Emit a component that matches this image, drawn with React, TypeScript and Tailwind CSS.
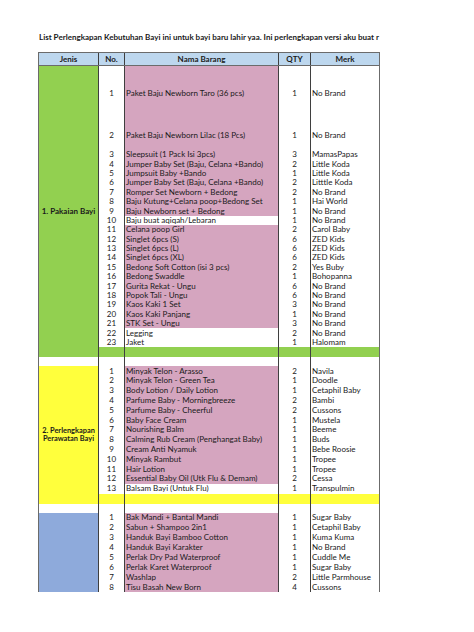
import React from "react";

type Item = [string, string, string, string, boolean];

const sec1: Item[] = [
  ["3", "Sleepsuit (1 Pack Isi 3pcs)", "3", "MamasPapas", true],
  ["4", "Jumper Baby Set (Baju, Celana +Bando)", "2", "Little Koda", true],
  ["5", "Jumpsuit Baby +Bando", "1", "Little Koda", true],
  ["6", "Jumper Baby Set (Baju, Celana +Bando)", "2", "Litttle Koda", true],
  ["7", "Romper Set Newborn + Bedong", "2", "No Brand", true],
  ["8", "Baju Kutung+Celana poop+Bedong Set", "1", "Hai World", true],
  ["9", "Baju Newborn set + Bedong", "1", "No Brand", true],
  ["10", "Baju buat aqiqah/Lebaran", "1", "No Brand", false],
  ["11", "Celana poop Girl", "2", "Carol Baby", true],
  ["12", "Singlet 6pcs (S)", "6", "ZED Kids", true],
  ["13", "Singlet 6pcs (L)", "6", "ZED Kids", true],
  ["14", "Singlet 6pcs (XL)", "6", "ZED Kids", true],
  ["15", "Bedong Soft Cotton (isi 3 pcs)", "2", "Yes Buby", true],
  ["16", "Bedong Swaddle", "1", "Bohopanna", true],
  ["17", "Gurita Rekat - Ungu", "6", "No Brand", true],
  ["18", "Popok Tali - Ungu", "6", "No Brand", true],
  ["19", "Kaos Kaki 1 Set", "3", "No Brand", true],
  ["20", "Kaos Kaki Panjang", "1", "No Brand", true],
  ["21", "STK Set - Ungu", "3", "No Brand", true],
  ["22", "Legging", "2", "No Brand", false],
  ["23", "Jaket", "1", "Halomam", false],
];

const sec2: Item[] = [
  ["1", "Minyak Telon - Arasso", "2", "Navila", true],
  ["2", "Minyak Telon - Green Tea", "1", "Doodle", true],
  ["3", "Body Lotion / Daily Lotion", "1", "Cetaphil Baby", true],
  ["4", "Parfume Baby - Morningbreeze", "2", "Bambi", true],
  ["5", "Parfume Baby - Cheerful", "2", "Cussons", true],
  ["6", "Baby Face Cream", "1", "Mustela", true],
  ["7", "Nourishing Balm", "1", "Beeme", true],
  ["8", "Calming Rub Cream (Penghangat Baby)", "1", "Buds", true],
  ["9", "Cream Anti Nyamuk", "1", "Bebe Roosie", true],
  ["10", "Minyak Rambut", "1", "Tropee", true],
  ["11", "Hair Lotion", "1", "Tropee", true],
  ["12", "Essential Baby Oil (Utk Flu & Demam)", "2", "Cessa", true],
  ["13", "Balsam Bayi (Untuk Flu)", "1", "Transpulmin", false],
];

const sec3: Item[] = [
  ["1", "Bak Mandi + Bantal Mandi", "1", "Sugar Baby", true],
  ["2", "Sabun + Shampoo 2in1", "1", "Cetaphil Baby", true],
  ["3", "Handuk Bayi Bamboo Cotton", "1", "Kuma Kuma", true],
  ["4", "Handuk Bayi Karakter", "1", "No Brand", true],
  ["5", "Perlak Dry Pad Waterproof", "1", "Cuddle Me", true],
  ["6", "Perlak Karet Waterproof", "1", "Sugar Baby", true],
  ["7", "Washlap", "2", "Little Parmhouse", true],
  ["8", "Tisu Basah New Born", "4", "Cussons", true],
];

function Row({ item, h }: { item: Item; h: string }) {
  const [no, name, qty, merk, pink] = item;
  return (
    <div className={`flex ${h}`}>
      <div className="w-[26px] shrink-0 border-r border-[#3f3f3f] flex items-center justify-center">
        {no}
      </div>
      <div
        className={`w-[154px] shrink-0 border-r border-[#3f3f3f] flex items-center pl-[1px] whitespace-nowrap overflow-hidden ${
          pink ? "bg-[#d5a5bf]" : "bg-white"
        }`}
      >
        {name}
      </div>
      <div className="w-[32px] shrink-0 border-r border-[#3f3f3f] flex items-center justify-center">
        {qty}
      </div>
      <div className="w-[68px] shrink-0 flex items-center pl-[1px] whitespace-nowrap">
        {merk}
      </div>
    </div>
  );
}

function BarRow({ color, h }: { color: string; h: string }) {
  return (
    <div className={`flex ${h} ${color}`}>
      <div className="w-[26px] shrink-0 border-r border-[#3f3f3f]" />
      <div className="w-[154px] shrink-0 border-r border-[#3f3f3f]" />
      <div className="w-[32px] shrink-0 border-r border-[#3f3f3f]" />
      <div className="w-[68px] shrink-0" />
    </div>
  );
}

function GapRow() {
  return (
    <div className="flex h-[9.4px] bg-white">
      <div className="w-[60px] shrink-0 border-r border-[#3f3f3f]" />
      <div className="w-[26px] shrink-0 border-r border-[#3f3f3f]" />
      <div className="w-[154px] shrink-0 border-r border-[#3f3f3f]" />
      <div className="w-[32px] shrink-0 border-r border-[#3f3f3f]" />
      <div className="w-[68px] shrink-0" />
    </div>
  );
}

export default function App() {
  return (
    <div
      className="w-[474px] h-[632px] bg-white text-[#1a1a1a]"
      style={{ fontFamily: "Lato, 'Open Sans', sans-serif" }}
    >
      <div className="h-[592px] overflow-hidden">
        <div className="pt-[32px] pl-[39px] h-[52px] text-[8px] leading-[10px] font-bold whitespace-nowrap overflow-hidden w-[380px]">
          List Perlengkapan Kebutuhan Bayi ini untuk bayi baru lahir yaa. Ini perlengkapan versi aku buat r
        </div>
        <div className="ml-[38px] w-[342px] border-l border-r border-[#6b6b6b] text-[8px] leading-[9px]">
          {/* header */}
          <div className="flex h-[14px] bg-[#bdd7ee] border-t border-b border-[#6b6b6b] font-bold">
            <div className="w-[60px] shrink-0 border-r border-[#3f3f3f] flex items-center justify-center">
              Jenis
            </div>
            <div className="w-[26px] shrink-0 border-r border-[#3f3f3f] flex items-center justify-center">
              No.
            </div>
            <div className="w-[154px] shrink-0 border-r border-[#3f3f3f] flex items-center justify-center">
              Nama Barang
            </div>
            <div className="w-[32px] shrink-0 border-r border-[#3f3f3f] flex items-center justify-center">
              QTY
            </div>
            <div className="w-[68px] shrink-0 flex items-center justify-center">
              Merk
            </div>
          </div>

          {/* section 1 */}
          <div className="flex">
            <div className="w-[60px] shrink-0 border-r border-[#3f3f3f] bg-[#92d050] flex items-center justify-center font-bold text-center">
              1. Pakaian Bayi
            </div>
            <div className="flex flex-col">
              <Row
                item={["1", "Paket Baju Newborn Taro (36 pcs)", "1", "No Brand", true]}
                h="h-[54px]"
              />
              <Row
                item={["2", "Paket Baju Newborn Lilac (18 Pcs)", "1", "No Brand", true]}
                h="h-[30px]"
              />
              {sec1.map((it) => (
                <Row key={it[0]} item={it} h="h-[9.4px]" />
              ))}
              <BarRow color="bg-[#92d050]" h="h-[9.6px]" />
            </div>
          </div>
          <GapRow />

          {/* section 2 */}
          <div className="flex">
            <div className="w-[60px] shrink-0 border-r border-[#3f3f3f] bg-[#ffff3c] flex flex-col items-center justify-center font-bold text-center text-[7.4px] leading-[8px]">
              <span className="block h-[8px]">2. Perlengkapan</span>
              <span className="block h-[8px]">Perawatan Bayi</span>
            </div>
            <div className="flex flex-col">
              {sec2.map((it) => (
                <Row key={it[0]} item={it} h="h-[9.8px]" />
              ))}
              <BarRow color="bg-[#ffff3c]" h="h-[10px]" />
            </div>
          </div>
          <GapRow />

          {/* section 3 */}
          <div className="flex">
            <div className="w-[60px] h-[168px] shrink-0 border-r border-[#3f3f3f] bg-[#8eaadb] flex items-center justify-center font-bold text-center">
              3. Perlengkapan
            </div>
            <div className="flex flex-col">
              {sec3.map((it) => (
                <Row key={it[0]} item={it} h="h-[9.9px]" />
              ))}
              <div className="flex h-[80px]">
                <div className="w-[26px] shrink-0 border-r border-[#3f3f3f]" />
                <div className="w-[154px] shrink-0 border-r border-[#3f3f3f] bg-[#d5a5bf]" />
                <div className="w-[32px] shrink-0 border-r border-[#3f3f3f]" />
                <div className="w-[68px] shrink-0" />
              </div>
            </div>
          </div>
        </div>
      </div>
    </div>
  );
}
